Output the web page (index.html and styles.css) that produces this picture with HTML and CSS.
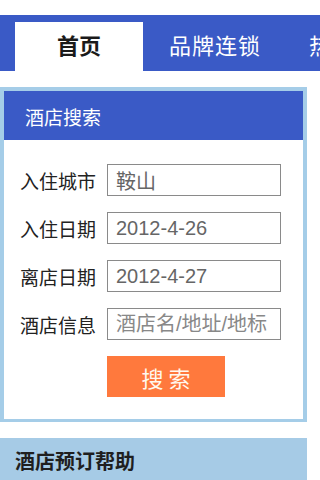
FILE: index.html
```html
<!DOCTYPE html>
<html lang="zh">

<head>
    <meta charset="UTF-8">
    <meta name="viewport" content="width=device-width, initial-scale=1.0">
    <title>酒店搜索</title>
    <link rel="stylesheet" href="styles.css">
</head>

<body>
    <div class="nav">
        <div class="tab tab-home active">首页</div>
        <div class="tab tab-brand">品牌连锁</div>
        <div class="tab tab-hot">热门</div>
    </div>

    <div class="panel">
        <div class="panel-head">酒店搜索</div>
        <div class="panel-body">
            <div class="row">
                <span class="label">入住城市</span>
                <input type="text" class="field" value="鞍山">
            </div>
            <div class="row">
                <span class="label">入住日期</span>
                <input type="text" class="field" value="2012-4-26">
            </div>
            <div class="row">
                <span class="label">离店日期</span>
                <input type="text" class="field" value="2012-4-27">
            </div>
            <div class="row">
                <span class="label">酒店信息</span>
                <input type="text" class="field" placeholder="酒店名/地址/地标">
            </div>
            <div class="row">
                <button class="btn">搜 索</button>
            </div>
        </div>
    </div>

    <div class="help">酒店预订帮助</div>
</body>

</html>
```

FILE: styles.css
```css
* {
    margin: 0;
    padding: 0;
    box-sizing: border-box;
}

body {
    font-family: "Liberation Sans", "Noto Sans CJK SC", sans-serif;
    background-color: #fff;
    width: 320px;
    overflow: hidden;
}

/* 顶部导航 */
.nav {
    margin-top: 15px;
    height: 56px;
    background-color: #3a5ac6;
    display: flex;
    align-items: flex-end;
    padding-left: 15px;
    white-space: nowrap;
    overflow: hidden;
}

.tab {
    height: 49px;
    line-height: 49px;
    font-size: 22px;
    color: #fff;
    text-align: center;
    flex-shrink: 0;
}

.tab-home {
    width: 128px;
}

.tab-brand {
    width: 144px;
    letter-spacing: 1px;
}

.tab-hot {
    width: 144px;
    text-align: left;
    padding-left: 22px;
}

.tab.active {
    background-color: #fff;
    color: #1a1a1a;
    font-weight: bold;
}

/* 搜索面板 */
.panel {
    width: 307px;
    margin-top: 16px;
    border: 4px solid #a5cde8;
    border-bottom-width: 3px;
}

.panel-head {
    height: 49px;
    line-height: 49px;
    padding-top: 3px;
    background-color: #3a5ac6;
    color: #fff;
    font-size: 19px;
    padding-left: 21px;
}

.panel-body {
    background-color: #fff;
    padding: 24px 0 22px 16px;
}

.row {
    display: flex;
    align-items: center;
    margin-bottom: 16px;
}

.row:last-child {
    margin-bottom: 0;
    padding-left: 87px;
}

.label {
    width: 87px;
    font-size: 19px;
    color: #222;
}

.field {
    width: 174px;
    height: 32px;
    border: 1px solid #8a8a8a;
    padding-left: 8px;
    font-size: 20px;
    color: #666;
    font-family: "Liberation Sans", "Noto Sans CJK SC", sans-serif;
    outline: none;
}

.field::placeholder {
    color: #888;
}

.btn {
    width: 118px;
    height: 41px;
    border: none;
    background-color: #ff793d;
    color: #fff8ee;
    font-size: 22px;
    font-family: "Noto Sans CJK SC", sans-serif;
}

/* 帮助栏 */
.help {
    width: 307px;
    height: 48px;
    margin-top: 16px;
    background-color: #a6cbe6;
    padding-left: 15px;
    line-height: 48px;
    font-size: 20px;
    font-weight: bold;
    color: #1f1f1f;
}
```
